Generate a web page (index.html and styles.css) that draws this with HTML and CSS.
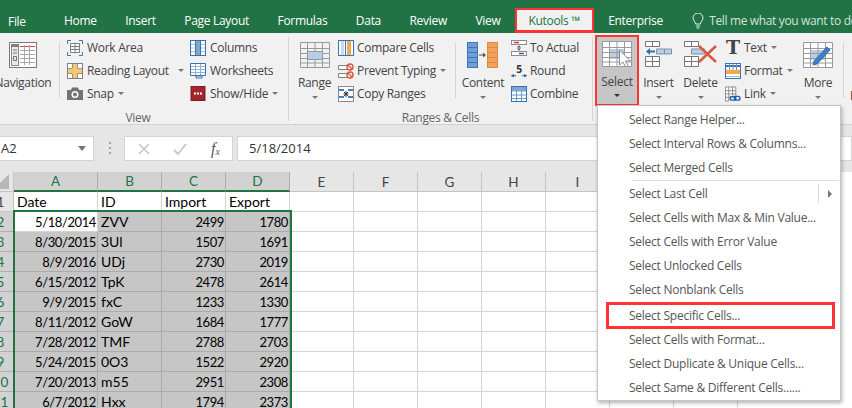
FILE: index.html
```html
<!DOCTYPE html>
<html lang="en">
<head>
<meta charset="utf-8">
<title>Kutools Select menu</title>
<link rel="stylesheet" href="styles.css">
</head>
<body>
<div class="app">
  <nav class="tabs">
    <span class="tab tab-file">File</span>
    <span class="tab">Home</span>
    <span class="tab">Insert</span>
    <span class="tab">Page Layout</span>
    <span class="tab">Formulas</span>
    <span class="tab">Data</span>
    <span class="tab">Review</span>
    <span class="tab">View</span>
    <span class="tab tab-kutools">Kutools ™</span>
    <span class="tab">Enterprise</span>
    <span class="tell">
      <svg class="bulb" width="12" height="16" viewBox="0 0 12 16"><path d="M3.5 11C3.5 8.5 1 7.500 1 5a5 5 0 0 1 10 0c0 2.500-2.500 3.500-2.500 6zM4 13h4M4.500 15h3" fill="none" stroke="#e6efe9" stroke-width="1"/></svg>
      Tell me what you want to do
    </span>
  </nav>

  <section class="ribbon">
    <div class="group group-view">
      <div class="group-body">
        <div class="big big-nav">
          <svg class="ico" width="28" height="26" viewBox="0 0 28 26"><rect x=".5" y=".5" width="27" height="25" fill="#fff" stroke="#7b7b7b"/><rect x="2.500" y="2.500" width="7" height="21" fill="#e8e8e8" stroke="#8a8a8a"/><rect x="2" y="2" width="8" height="3" fill="#808080"/><path d="M4 8h4M4 11h4M4.500 14.500h3v4h-3z" fill="none" stroke="#777"/><path d="M11 4.500h15" stroke="#d8493f"/><path d="M11 8.500h15M11 12.500h15M11 16.500h15M11 20.500h15M15.500 3v20M20.500 3v20" stroke="#a8a8a8"/></svg>
          <span class="big-label">Navigation</span>
        </div>
        <i class="vsep"></i>
        <div class="col col-view1">
          <div class="row"><svg width="16" height="16" viewBox="0 0 16 16"><path d="M.5 4V.5H4M12 .5h3.500V4M.5 12v3.500H4M15.500 12v3.500H12" fill="none" stroke="#3f76b5"/><path d="M3.500 3.500h9v9h-9zM3.500 6.500h9M3.500 9.500h9M8 3.500v9" fill="#fff" stroke="#808080"/></svg>Work Area</div>
          <div class="row"><svg width="16" height="16" viewBox="0 0 16 16"><rect x=".5" y=".5" width="15" height="15" fill="#fff" stroke="#808080"/><path d="M6 1h4v14H6zM1 6h14v4H1z" fill="#f6c968"/><path d="M5.500 1v4.500H1M10.500 1v4.500H15M5.500 15v-4.500H1M10.500 15v-4.500H15" fill="none" stroke="#909090"/></svg>Reading Layout<b class="caret caret-far"></b></div>
          <div class="row"><svg width="16" height="13" viewBox="0 0 16 13"><path d="M0 3h4l1-2.500h6L12 3h4v10H0z" fill="#737373"/><circle cx="8" cy="7.500" r="3.500" fill="#fff"/><circle cx="8" cy="7.500" r="2" fill="#737373"/></svg>Snap<b class="caret"></b></div>
        </div>
        <div class="col col-view2">
          <div class="row"><svg width="16" height="16" viewBox="0 0 16 16"><rect x=".5" y=".5" width="15" height="15" fill="#fff" stroke="#3a72b0"/><rect x="5" y="1" width="5" height="14" fill="#7fa7d0"/><path d="M1 4.500h4M1 8h4M1 11.500h4M10.500 4.500H15M10.500 8H15M10.500 11.500H15" stroke="#a9c4e0"/><path d="M5.500 1v14M10.500 1v14" stroke="#3a72b0"/></svg>Columns</div>
          <div class="row"><svg width="16" height="16" viewBox="0 0 16 16"><path d="M.5.500h15v12H.5zM6 13h6v2H6z" fill="#fff" stroke="#3a72b0"/><path d="M1 3.500h14M1 6.500h14M1 9.500h14M5.500 1v11M10.500 1v11" stroke="#8fb2d6"/></svg>Worksheets</div>
          <div class="row"><svg width="16" height="15" viewBox="0 0 16 15"><rect x="1" y=".5" width="14" height="14" fill="#a4262c" stroke="#7e1e22"/><path d="M4 7.500h2M7 7.500h2M10 7.500h2" stroke="#fff" stroke-width="2"/></svg>Show/Hide<b class="caret"></b></div>
        </div>
      </div>
      <div class="group-label">View</div>
    </div>

    <div class="group group-ranges">
      <div class="group-body">
        <div class="big big-range">
          <svg class="ico" width="30" height="26" viewBox="0 0 30 26"><rect x="7.500" y="9.500" width="15" height="8" fill="#b9cde5"/><path d="M.5.500h29v25H.5zM.5 6.500h29M.5 11.500h29M.5 16.500h29M.5 21h29M7.500.5v25M15 .5v25M22.500.5v25" fill="none" stroke="#9a9a9a"/><rect x="7.500" y="9.500" width="15" height="8" fill="#b9cde5" stroke="#8d9aa8"/></svg>
          <span class="big-label">Range</span><b class="caret caret-big"></b>
        </div>
        <div class="col col-ranges">
          <div class="row"><svg width="16" height="16" viewBox="0 0 16 16"><rect x=".5" y=".5" width="15" height="15" fill="#fff" stroke="#3a72b0"/><rect x="9" y="1" width="4" height="14" fill="#efa756"/><rect x="3" y="1" width="3" height="14" fill="#c7d9ec"/><path d="M7.500 1v14" stroke="#3a72b0"/></svg>Compare Cells</div>
          <div class="row"><svg width="16" height="16" viewBox="0 0 16 16"><path d="M.5 2.500h9v4h-9zM.5 10.500h9v4h-9z" fill="#fff" stroke="#808080"/><g fill="#fff" stroke="#d8553f" stroke-width="1.400"><circle cx="12" cy="4" r="3"/><circle cx="12" cy="12" r="3"/><path d="M10 2l4 4M10 10l4 4"/></g></svg>Prevent Typing<b class="caret"></b></div>
          <div class="row"><svg width="16" height="16" viewBox="0 0 16 16"><rect x=".5" y=".5" width="15" height="15" fill="#fff" stroke="#8a8a8a"/><path d="M1 3h5v2H1zM10 3h5v2h-5zM1 10h5v2H1zM10 10h5v2h-5z" fill="#3f80c8"/><path d="M8 5v6M5.500 8h5M6 6l4 4M10 6l-4 4" stroke="#333"/></svg>Copy Ranges</div>
        </div>
        <i class="vsep vsep-ranges"></i>
        <div class="big big-content">
          <svg class="ico" width="32" height="26" viewBox="0 0 32 26"><g stroke-width="1"><rect x=".5" y=".5" width="10" height="25" fill="#6f9fd6" stroke="#3f76b5"/><path d="M1 5.500h9M1 10.500h9M1 15.500h9M1 20.500h9" stroke="#3f76b5"/><rect x="20.500" y=".5" width="10" height="25" fill="#f0a25e" stroke="#dd8a3e"/><path d="M21 5.500h9M21 10.500h9M21 15.500h9M21 20.500h9" stroke="#dd8a3e"/></g><path d="M12 13h5" stroke="#555"/><path d="M16 10.500l3 2.500-3 2.500z" fill="#555"/></svg>
          <span class="big-label">Content</span><b class="caret caret-big"></b>
        </div>
        <div class="col col-ranges2">
          <div class="row"><svg width="16" height="16" viewBox="0 0 16 16"><rect x=".5" y=".5" width="15" height="4" fill="#fff" stroke="#8a8a8a"/><path d="M3 2.500h5" stroke="#c8352c" stroke-width="1.400"/><rect x=".5" y="11.500" width="15" height="4" fill="#fff" stroke="#8a8a8a"/><path d="M8 13.500h5" stroke="#2458a8" stroke-width="1.400"/><path d="M8 5.500l2 2H6zM6 8.500h4l-2 2z" fill="#444"/></svg>To Actual</div>
          <div class="row"><svg width="16" height="16" viewBox="0 0 17 16"><text class="round-five" x="8.500" y="10" text-anchor="middle">5</text><path d="M.5 13h5M11.500 13h5" stroke="#2f5f9f"/><path d="M0 13l3-2v4zM17 13l-3-2v4z" fill="#2f5f9f"/></svg>Round</div>
          <div class="row"><svg width="16" height="16" viewBox="0 0 16 16"><rect x=".5" y=".5" width="15" height="15" fill="#fff" stroke="#3a72b0"/><rect x="1" y="1" width="14" height="4.500" fill="#7fa7d0"/><path d="M1 9h14M1 12.500h14M5.500 5v10M10.500 5v10" stroke="#6a98c8"/></svg>Combine</div>
        </div>
      </div>
      <div class="group-label">Ranges &amp; Cells</div>
    </div>

    <div class="group group-edit">
      <div class="group-body">
        <div class="big big-select">
          <svg class="ico" width="30" height="26" viewBox="0 0 30 26"><rect x=".5" y=".5" width="29" height="25" fill="#fff"/><rect x="8" y="8" width="14" height="10" fill="#b9cde5"/><path d="M.5.500h29v25H.5zM.5 6.500h29M.5 11.500h29M.5 16.500h29M.5 21h29M7.500.5v25M15 .5v25M22.500.5v25" fill="none" stroke="#9a9a9a"/><path d="M17.500 9v15l3.500-3 2.500 5 2.500-1-2.500-5h5z" fill="#fff" stroke="#8d8d8d"/></svg>
          <span class="big-label">Select</span><b class="caret caret-big caret-dark"></b>
        </div>
        <div class="big big-insert">
          <svg class="ico" width="27" height="26" viewBox="0 0 27 26"><path d="M.5.500h14v5H.5zM7.500.5v5M.5 15.500h14v10H.5zM.5 20.500h14M7.500 15.500v10" fill="#fff" stroke="#777"/><path d="M11.500 8h15v5h-15z" fill="#b9cde5" stroke="#7b93ad"/><path d="M19.500 8v5" stroke="#7b93ad"/><path d="M10 10.500H4" stroke="#2f6fb5" stroke-width="2"/><path d="M1 10.500l4-3.500v7z" fill="#2f6fb5"/></svg>
          <span class="big-label">Insert</span><b class="caret caret-big"></b>
        </div>
        <div class="big big-delete">
          <svg class="ico" width="34" height="26" viewBox="0 0 34 26"><path d="M.5.500h14v5H.5zM7.500.5v5M.5 15.500h14v10H.5zM.5 20.500h14M7.500 15.500v10" fill="#fff" stroke="#777"/><path d="M7.500 8h13v5h-13z" fill="#b9cde5" stroke="#7b93ad"/><path d="M15 5l17 16M32 5L15 21" stroke="#d9593f" stroke-width="2.500"/></svg>
          <span class="big-label">Delete</span><b class="caret caret-big"></b>
        </div>
        <div class="col col-edit">
          <div class="row row-edit"><span class="serif-t">T</span>Text<b class="caret"></b></div>
          <div class="row row-edit"><svg width="16" height="16" viewBox="0 0 16 16"><rect x=".5" y=".5" width="15" height="15" fill="#fff" stroke="#3a72b0"/><path d="M1 3h14" stroke="#3a72b0" stroke-width="2"/><rect x="1" y="7" width="14" height="4" fill="#f0a84a"/><path d="M4.500 1v6M8 1v6M11.500 1v6" stroke="#6a98c8"/><path d="M1 13.500h14" stroke="#9cbbdd"/></svg>Format<b class="caret"></b></div>
          <div class="row row-edit"><svg width="16" height="16" viewBox="0 0 17 16"><path d="M.5.500h11v11H.5zM.5 4.500h11M.5 8h11M4 .5v15h-3.500V11M8 .5V9" fill="#fff" stroke="#8a8a8a"/><rect x="5.500" y="10.500" width="6" height="4" rx="2" fill="none" stroke="#1f5fb0" stroke-width="1.500"/><rect x="10" y="10.500" width="6" height="4" rx="2" fill="none" stroke="#1f5fb0" stroke-width="1.500"/></svg>Link<b class="caret"></b></div>
        </div>
        <div class="big big-more">
          <svg class="ico" width="30" height="26" viewBox="0 0 30 26"><rect x=".5" y=".5" width="29" height="25" fill="#fff"/><rect x="8" y="8" width="14" height="10" fill="#b9cde5"/><path d="M.5.500h29v25H.5zM.5 6.500h29M.5 11.500h29M.5 16.500h29M.5 21h29M7.500.5v25M15 .5v25M22.500.5v25" fill="none" stroke="#9a9a9a"/><path d="M11 19l-1 4 4-1L27 8l-3-3z" fill="#3f80c8" stroke="#2f6fb5"/></svg>
          <span class="big-label">More</span><b class="caret caret-big"></b>
        </div>
        <i class="vsep vsep-more"></i>
        <span class="cut-label">F</span>
      </div>
    </div>
  </section>

  <section class="formula">
    <div class="namebox">A2<b class="name-arrow"></b></div>
    <div class="dots"><i></i><i></i><i></i></div>
    <div class="fx-box">
      <svg width="14" height="14" viewBox="0 0 14 14"><path d="M2 2l10 10M12 2L2 12" stroke="#c6c6c6" stroke-width="1.600"/></svg>
      <svg width="14" height="14" viewBox="0 0 14 14"><path d="M1 8l4 4 8-10" fill="none" stroke="#c6c6c6" stroke-width="1.800"/></svg>
      <span class="fx">f<sub>x</sub></span>
    </div>
    <div class="input">5/18/2014</div>
  </section>

  <section class="sheet">
    <div class="grid">
      <div class="cell corner"><i></i></div>
      <div class="cell colh on">A</div><div class="cell colh on">B</div><div class="cell colh on">C</div><div class="cell colh on">D</div><div class="cell colh">E</div><div class="cell colh">F</div><div class="cell colh">G</div><div class="cell colh">H</div><div class="cell colh">I</div><div class="cell colh">J</div><div class="cell colh">K</div>

      <div class="cell rowh">1</div>
      <div class="cell">Date</div><div class="cell">ID</div><div class="cell">Import</div><div class="cell">Export</div><div class="cell"></div><div class="cell"></div><div class="cell"></div><div class="cell"></div><div class="cell"></div><div class="cell"></div><div class="cell"></div>

      <div class="cell rowh on">2</div>
      <div class="cell num active">5/18/2014</div><div class="cell s">ZVV</div><div class="cell s num">2499</div><div class="cell s num">1780</div><div class="cell"></div><div class="cell"></div><div class="cell"></div><div class="cell"></div><div class="cell"></div><div class="cell"></div><div class="cell"></div>

      <div class="cell rowh on">3</div>
      <div class="cell s num">8/30/2015</div><div class="cell s">3Ul</div><div class="cell s num">1507</div><div class="cell s num">1691</div><div class="cell"></div><div class="cell"></div><div class="cell"></div><div class="cell"></div><div class="cell"></div><div class="cell"></div><div class="cell"></div>

      <div class="cell rowh on">4</div>
      <div class="cell s num">8/9/2016</div><div class="cell s">UDj</div><div class="cell s num">2730</div><div class="cell s num">2019</div><div class="cell"></div><div class="cell"></div><div class="cell"></div><div class="cell"></div><div class="cell"></div><div class="cell"></div><div class="cell"></div>

      <div class="cell rowh on">5</div>
      <div class="cell s num">6/15/2012</div><div class="cell s">TpK</div><div class="cell s num">2478</div><div class="cell s num">2614</div><div class="cell"></div><div class="cell"></div><div class="cell"></div><div class="cell"></div><div class="cell"></div><div class="cell"></div><div class="cell"></div>

      <div class="cell rowh on">6</div>
      <div class="cell s num">9/9/2015</div><div class="cell s">fxC</div><div class="cell s num">1233</div><div class="cell s num">1330</div><div class="cell"></div><div class="cell"></div><div class="cell"></div><div class="cell"></div><div class="cell"></div><div class="cell"></div><div class="cell"></div>

      <div class="cell rowh on">7</div>
      <div class="cell s num">8/11/2012</div><div class="cell s">GoW</div><div class="cell s num">1684</div><div class="cell s num">1777</div><div class="cell"></div><div class="cell"></div><div class="cell"></div><div class="cell"></div><div class="cell"></div><div class="cell"></div><div class="cell"></div>

      <div class="cell rowh on">8</div>
      <div class="cell s num">7/28/2012</div><div class="cell s">TMF</div><div class="cell s num">2788</div><div class="cell s num">2703</div><div class="cell"></div><div class="cell"></div><div class="cell"></div><div class="cell"></div><div class="cell"></div><div class="cell"></div><div class="cell"></div>

      <div class="cell rowh on">9</div>
      <div class="cell s num">5/24/2015</div><div class="cell s">0O3</div><div class="cell s num">1522</div><div class="cell s num">2920</div><div class="cell"></div><div class="cell"></div><div class="cell"></div><div class="cell"></div><div class="cell"></div><div class="cell"></div><div class="cell"></div>

      <div class="cell rowh on">10</div>
      <div class="cell s num">7/20/2013</div><div class="cell s">m55</div><div class="cell s num">2951</div><div class="cell s num">2308</div><div class="cell"></div><div class="cell"></div><div class="cell"></div><div class="cell"></div><div class="cell"></div><div class="cell"></div><div class="cell"></div>

      <div class="cell rowh on">11</div>
      <div class="cell s num">6/7/2012</div><div class="cell s">Hxx</div><div class="cell s num">1794</div><div class="cell s num">2373</div><div class="cell"></div><div class="cell"></div><div class="cell"></div><div class="cell"></div><div class="cell"></div><div class="cell"></div><div class="cell"></div>
    </div>
    <div class="selection"></div>
  </section>

  <div class="menu">
    <div class="item">Select Range Helper...</div>
    <div class="item">Select Interval Rows &amp; Columns...</div>
    <div class="item">Select Merged Cells</div>
    <div class="sep"></div>
    <div class="item item-sub">Select Last Cell<span class="sub"><b></b></span></div>
    <div class="item">Select Cells with Max &amp; Min Value...</div>
    <div class="item">Select Cells with Error Value</div>
    <div class="item">Select Unlocked Cells</div>
    <div class="item">Select Nonblank Cells</div>
    <div class="sep"></div>
    <div class="item item-hit">Select Specific Cells...</div>
    <div class="item">Select Cells with Format...</div>
    <div class="item">Select Duplicate &amp; Unique Cells...</div>
    <div class="item">Select Same &amp; Different Cells......</div>
  </div>
</div>
</body>
</html>
```

FILE: styles.css
```css
* { box-sizing: border-box; }
html, body { margin: 0; padding: 0; }
body { width: 852px; height: 408px; overflow: hidden; background: #fff; }
.app { position: relative; width: 852px; height: 408px; overflow: hidden; font-family: "Open Sans", "Noto Sans", sans-serif; font-size: 12px; color: #444; letter-spacing: -.3px; }

.tabs { display: flex; height: 33px; background: #217346; color: #fff; white-space: nowrap; }
.tab { flex: none; padding: 12px 14.25px 0; line-height: 17px; }
.tab-file { padding: 13px 0 0 8px; width: 49.75px; }
.tab-kutools { margin-top: 8px; padding: 2px 11.75px 0; border: 2.5px solid #f33; border-bottom-width: 3px; background: #f1f1f1; color: #217346; }
.tell { flex: none; display: flex; align-items: flex-start; padding: 12px 0 0 15px; line-height: 17px; color: #d3e3d9; letter-spacing: -.35px; }
.bulb { margin: 1px 5px 0 0; flex: none; }

.ribbon { display: flex; height: 92px; margin-left: -12px; width: 864px; background: #f1f1f1; border-bottom: 1px solid #d2d2d2; }
.group { flex: none; display: flex; flex-direction: column; margin-top: 4px; height: 84px; border-right: 1px solid #d4d4d4; }
.group-body { display: flex; height: 70px; margin-top: -4px; flex: none; }
.group-label { text-align: center; line-height: 18px; margin-top: 6px; color: #666; }
.group-view { width: 301px; }
.group-ranges { width: 304px; }
.group-edit { border-right: 0; width: 259px; }

.big { display: flex; flex-direction: column; align-items: center; padding-top: 9px; flex: none; }
.ico { flex: none; }
.big-label { line-height: 20px; margin-top: 5px; white-space: nowrap; }
.big-nav { width: 70px; }
.big-range { width: 43px; margin-left: 4px; }
.big-content { width: 50px; margin-left: 2px; }
.big-select { width: 44px; height: 71px; margin: 2px 0 0 2px; padding-top: 4px; border: 2.5px solid #f33; background: #c6c6c6; }
.big-insert { width: 39px; padding-top: 8px; }
.big-delete { width: 43px; margin-left: 1px; padding-top: 8px; }
.big-delete .big-label, .big-insert .big-label { margin-top: 6px; }
.big-more { width: 36px; margin-left: 0; }
.cut-label { margin: 54px 0 0 6px; }

.caret { display: inline-block; flex: none; width: 0; height: 0; margin-left: 4px; border: 3px solid transparent; border-top: 3.500px solid #777; border-bottom: 0; vertical-align: middle; }
.caret-far { margin-left: 9px; }
.caret-big { margin: 3px 0 0; }
.caret-dark { border-top-color: #333; margin-top: 2px; }

.vsep { display: block; flex: none; width: 1px; height: 55px; margin: 10px 0 0 1px; background: #d4d4d4; }
.vsep-ranges { margin-left: 0; }
.vsep-more { margin-left: 7px; }

.col { display: flex; flex-direction: column; padding-top: 3px; flex: none; }
.row { display: flex; flex: none; align-items: center; height: 23px; white-space: nowrap; }
.row svg { flex: none; margin-right: 4px; }
.col-view1 { width: 124px; margin-left: 6px; padding-left: 1px; }
.col-view2 { width: 97px; }
.col-ranges { width: 117px; margin-left: 2px; }
.col-ranges .row svg, .col-ranges2 .row svg { margin-right: 3px; }
.col-ranges2 { width: 80px; margin-left: 3px; }
.col-edit { width: 78px; padding-left: 3px; }
.row-edit svg { margin-right: 3px; }
.serif-t { width: 16px; margin-right: 3px; font: bold 19px/23px "DejaVu Serif", "Liberation Serif", serif; letter-spacing: 0; color: #444; text-align: center; }
.round-five { font: bold 11px "Open Sans", sans-serif; fill: #333; }

.formula { display: flex; height: 47px; padding-top: 11px; background: #e6e6e6; }
.namebox { position: relative; width: 95px; height: 25px; margin-left: -1px; padding: 3px 0 0 1px; background: #fff; border: 1px solid #d4d4d4; color: #333; font-size: 13px; line-height: 17px; letter-spacing: 0; }
.name-arrow { position: absolute; right: 7px; top: 9px; border: 4px solid transparent; border-top: 5px solid #777; border-bottom: 0; }
.dots { display: flex; flex-direction: column; gap: 3px; width: 30px; padding: 6px 0 0 15px; }
.dots i { display: block; width: 2px; height: 2px; background: #a0a0a0; }
.fx-box { display: flex; align-items: center; width: 109px; height: 25px; padding-left: 12px; gap: 22px; background: #fff; border: 1px solid #d4d4d4; }
.fx { margin-left: 2px; font: italic 16px "Liberation Serif", serif; color: #555; letter-spacing: 0; line-height: 20px; }
.fx sub { font-size: 10px; line-height: 0; vertical-align: -1px; }
.input { flex: 1; height: 25px; margin-left: 4px; padding: 3px 0 0 11px; background: #fff; border: 1px solid #d4d4d4; color: #333; font-size: 13px; line-height: 17px; letter-spacing: 0; }

.sheet { position: relative; height: 236px; overflow: hidden; background: #fff; }
.grid { display: grid; width: 890px; margin-left: -12px; grid-template-columns: 26px 84px repeat(10, 64px); grid-template-rows: 20px repeat(11, 20px); font-family: Lato, "Liberation Sans", sans-serif; font-size: 14px; letter-spacing: 0; color: #000; }
.cell { display: flex; align-items: center; padding: 0 2px 0 3px; border-right: 1px solid #d4d4d4; border-bottom: 1px solid #d4d4d4; white-space: nowrap; overflow: hidden; }
.num { justify-content: flex-end; font-size: 13px; letter-spacing: -.4px; padding-right: 1px; }
.s { background: #c6c6c6; border-color: #ababab; }
.corner { position: relative; background: #e6e6e6; border-color: #c4c4c4; }
.corner i { position: absolute; right: 4px; bottom: 2px; width: 0; height: 0; border-style: solid; border-width: 0 0 15px 15px; border-color: transparent transparent #b7b7b7 transparent; }
.colh, .rowh { justify-content: center; padding: 0; background: #e6e6e6; border-color: #c4c4c4; color: #444; font-size: 13.500px; }
.colh.on { background: #d2d2d2; border-color: #aeaeae; border-bottom: 2px solid #217346; color: #217346; }
.rowh.on { background: #d2d2d2; border-color: #aeaeae; color: #217346; }
.active { background: #fff; }
.selection { position: absolute; left: 13px; top: 38px; width: 279px; height: 210px; border: 2px solid #217346; pointer-events: none; }

.menu { position: absolute; left: 597px; top: 105px; width: 244px; height: 296px; padding: 2px 1px; background: #fff; border: 1px solid #c6c6c6; box-shadow: 1px 2px 4px rgba(0,0,0,.3); letter-spacing: -.25px; }
.item { position: relative; height: 24px; padding-left: 30px; line-height: 23px; color: #555; white-space: nowrap; }
.sep { height: 2px; margin-left: 33px; border-top: 1px solid #e0e0e0; }
.sub { position: absolute; left: 219px; top: 2px; width: 1px; height: 19px; background: #dcdcdc; }
.sub b { position: absolute; left: 10px; top: 6px; border: 4px solid transparent; border-left: 4px solid #777; border-right: 0; }
.item-hit::after { content: ""; position: absolute; box-sizing: border-box; left: 7px; top: -2px; width: 229px; height: 27px; border: 3px solid #f33; }
```
